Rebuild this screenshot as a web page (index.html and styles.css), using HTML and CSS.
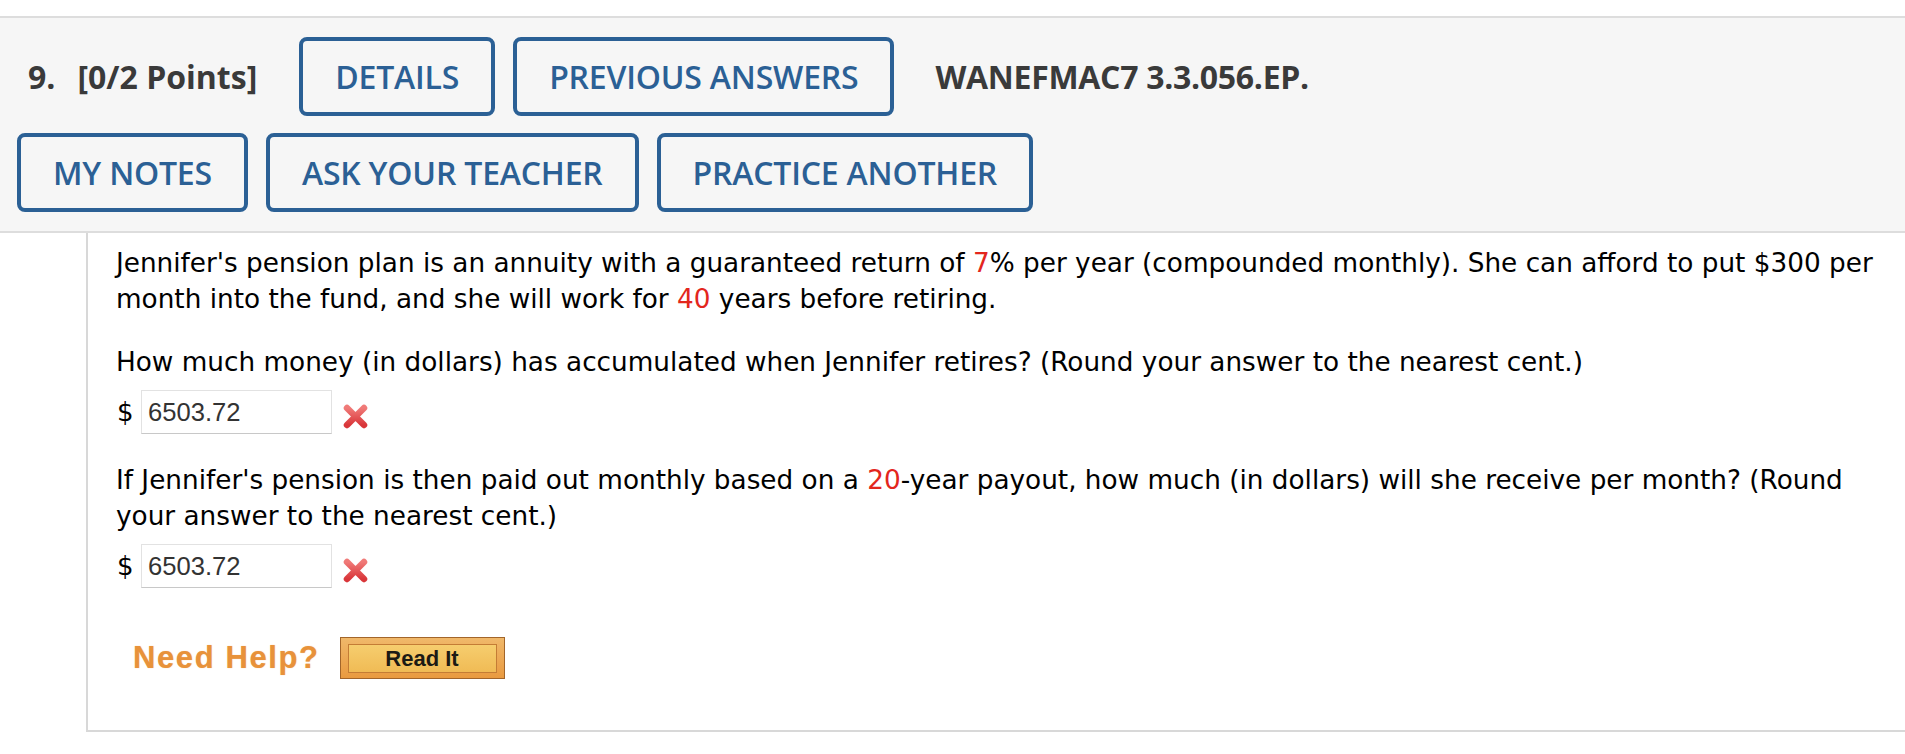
FILE: index.html
```html
<!DOCTYPE html>
<html lang="en">
<head>
<meta charset="utf-8">
<title>Question 9</title>
<link rel="stylesheet" href="styles.css">
</head>
<body>
<div class="header">
  <div class="row row-top">
    <span class="qnum">9.</span>
    <span class="points">[0/2 Points]</span>
    <button class="btn btn-first">DETAILS</button>
    <button class="btn">PREVIOUS ANSWERS</button>
    <span class="qid">WANEFMAC7 3.3.056.EP.</span>
  </div>
  <div class="row row-bottom">
    <button class="btn btn-flush">MY NOTES</button>
    <button class="btn">ASK YOUR TEACHER</button>
    <button class="btn">PRACTICE ANOTHER</button>
  </div>
</div>
<div class="content">
  <p class="qtext qtext-intro">Jennifer's pension plan is an annuity with a guaranteed return of <span class="red">7</span>% per year (compounded monthly). She can afford to put $300 per month into the fund, and she will work for <span class="red">40</span> years before retiring.</p>
  <p class="qtext">How much money (in dollars) has accumulated when Jennifer retires? (Round your answer to the nearest cent.)</p>
  <div class="answer">
    <span class="dollar">$</span>
    <span class="input">6503.72</span>
    <svg class="wrong" width="27" height="25" viewBox="0 0 27 25" aria-hidden="true">
      <defs>
        <linearGradient id="xg" x1="0" y1="0" x2="0" y2="1">
          <stop offset="0" stop-color="#f07a78"/>
          <stop offset="1" stop-color="#d9363a"/>
        </linearGradient>
      </defs>
      <path d="M5 4 L22 21 M22 4 L5 21" stroke="url(#xg)" stroke-width="6.5" stroke-linecap="round" fill="none"/>
    </svg>
  </div>
  <p class="qtext">If Jennifer's pension is then paid out monthly based on a <span class="red">20</span>-year payout, how much (in dollars) will she receive per month? (Round your answer to the nearest cent.)</p>
  <div class="answer">
    <span class="dollar">$</span>
    <span class="input">6503.72</span>
    <svg class="wrong" width="27" height="25" viewBox="0 0 27 25" aria-hidden="true">
      <path d="M5 4 L22 21 M22 4 L5 21" stroke="url(#xg)" stroke-width="6.5" stroke-linecap="round" fill="none"/>
    </svg>
  </div>
  <div class="help">
    <span class="need-help">Need Help?</span>
    <span class="read-it"><span class="read-it-inner">Read It</span></span>
  </div>
</div>
</body>
</html>
```

FILE: styles.css
```css
html, body {
  margin: 0;
  padding: 0;
  background: #ffffff;
}

body {
  font-family: "DejaVu Sans", Verdana, sans-serif;
  color: #000;
}

.header {
  margin-top: 16px;
  border-top: 2px solid #dddddd;
  border-bottom: 2px solid #dddddd;
  background: #f6f6f6;
  padding: 19px 17px 19px 17px;
  font-family: "Open Sans", sans-serif;
}

.row {
  display: flex;
  align-items: center;
}

.row-bottom {
  margin-top: 17px;
}

.qnum,
.points,
.qid {
  font-weight: 700;
  font-size: 32px;
  color: #3a3a3a;
}

.qnum {
  margin-left: 11px;
}

.points {
  margin-left: 22px;
}

.qid {
  margin-left: 41px;
  letter-spacing: -0.3px;
}

.btn {
  box-sizing: border-box;
  height: 79px;
  padding: 0 32px;
  margin-left: 18px;
  border: 4px solid #2b6095;
  border-radius: 8px;
  background: transparent;
  color: #2b6095;
  font-family: "Open Sans", sans-serif;
  font-weight: 600;
  font-size: 32px;
  line-height: 1;
  letter-spacing: -0.2px;
}

.btn-first {
  margin-left: 42px;
}

.btn-flush {
  margin-left: 0;
}

.content {
  margin-left: 86px;
  border-left: 2px solid #d8d8d8;
  border-bottom: 2px solid #d8d8d8;
  padding: 12px 20px 51px 28px;
}

.qtext {
  margin: 0 0 10px 0;
  font-size: 26.3px;
  line-height: 36px;
}

.qtext-intro {
  margin-bottom: 27px;
}

.red {
  color: #e3261d;
}

.answer {
  display: flex;
  align-items: center;
  height: 44px;
  margin-bottom: 28px;
  font-size: 26px;
}

.dollar {
  margin-left: 1px;
  width: 24px;
}

.input {
  box-sizing: border-box;
  width: 191px;
  height: 44px;
  padding: 0 6px;
  border: 1px solid #e2e2e2;
  border-bottom-color: #c8c8c8;
  display: flex;
  align-items: center;
  font-family: "Liberation Sans", Arial, sans-serif;
  font-size: 25.6px;
  color: #333;
  background: #fff;
}

.wrong {
  margin-left: 10px;
  margin-top: 8px;
}

.help {
  display: flex;
  align-items: center;
  margin-top: 49px;
  margin-left: 17px;
}

.need-help {
  font-family: "Liberation Sans", Arial, sans-serif;
  font-weight: 700;
  font-size: 31px;
  letter-spacing: 1.6px;
  color: #e8923a;
  text-shadow: 0 0 1px rgba(232, 146, 58, 0.6);
}

.read-it {
  box-sizing: border-box;
  margin-left: 20px;
  width: 165px;
  height: 42px;
  padding: 6px 7px 5px 7px;
  border: 1px solid #a2652a;
  background: linear-gradient(#f0b86a, #e99a40);
  display: flex;
}

.read-it-inner {
  flex: 1;
  display: flex;
  align-items: center;
  justify-content: center;
  border: 1px solid #c47c35;
  background: linear-gradient(#f6cd6e, #f0bb55);
  font-family: "Liberation Sans", Arial, sans-serif;
  font-weight: 700;
  font-size: 22px;
  color: #1c1a14;
}
```
